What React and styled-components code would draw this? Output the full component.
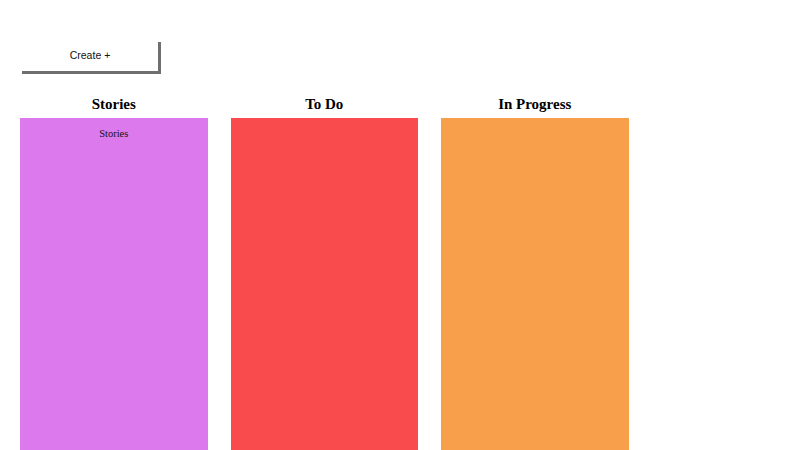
import React from 'react'
import styled, { createGlobalStyle } from 'styled-components'

const GlobalStyle = createGlobalStyle`
body{
  margin:0;
  background:#ffffff;
  font-family: 'Liberation Serif', 'Times New Roman', serif;
  overflow:hidden;
}
`

const Page = styled.div`
width:800px;
height:450px;
overflow:hidden;
padding:42px 0 0 20px;
box-sizing:border-box;
`

const CreateButton = styled.button`
display:block;
margin-left:2px;
width:139px;
height:32px;
padding:0 0 4px 0;
background:#ffffff;
border:none;
border-right:3px solid #6f6f6f;
border-bottom:3px solid #6f6f6f;
font-family: 'Liberation Sans', Arial, sans-serif;
font-size:10.5px;
color:#111;
cursor:pointer;
`

const Board = styled.div`
display:flex;
gap:23px;
margin-top:18px;
`

const Column = styled.div`
display:flex;
flex-direction:column;
width:187.5px;
`

const Title = styled.h3`
margin:0 0 2px 0;
height:24px;
line-height:24px;
text-align:center;
font-size:15px;
font-weight:bold;
color:#000;
`

const Lane = styled.div`
height:340px;
background:${props => props.color};
padding-top:10px;
box-sizing:border-box;
text-align:center;
font-size:10.5px;
color:#111;
`

const columns = [
  { title: 'Stories', color: '#dc79ec', label: 'Stories' },
  { title: 'To Do', color: '#f94a4d' },
  { title: 'In Progress', color: '#f89f4b' },
]

const App = () => {
  return (
    <>
      <GlobalStyle />
      <Page>
        <CreateButton>Create +</CreateButton>
        <Board>
          {columns.map(col => (
            <Column key={col.title}>
              <Title>{col.title}</Title>
              <Lane color={col.color}>{col.label}</Lane>
            </Column>
          ))}
        </Board>
      </Page>
    </>
  )
}

export default App
